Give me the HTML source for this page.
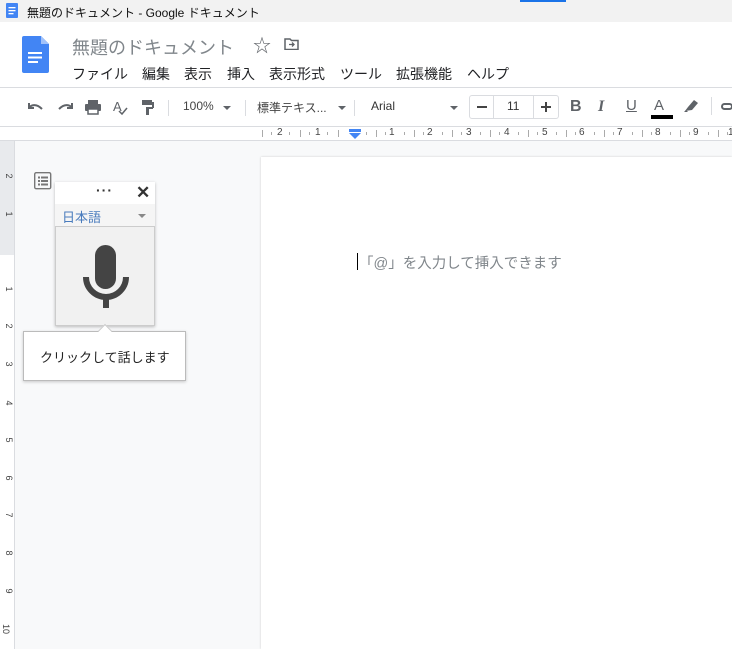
<!DOCTYPE html>
<html><head><meta charset="utf-8"><style>
*{margin:0;padding:0;box-sizing:border-box}
body{width:732px;height:649px;overflow:hidden;background:#f8f9fa;font-family:"Liberation Sans","Noto Sans CJK JP",sans-serif;position:relative}
.a{position:absolute}
.t{white-space:nowrap}
.m{position:absolute;top:64px;font-size:14px;color:#202124;white-space:nowrap}
.vr{position:absolute;left:4px;font-size:9px;color:#444;transform:rotate(90deg);width:10px;text-align:center}
.hr{position:absolute;top:127px;font-size:10px;color:#444}
</style></head><body>
<div class="a" style="left:0;top:0;width:732px;height:22px;background:#f2f2f2"></div>
<div class="a" style="left:520px;top:0;width:46px;height:2px;background:#1a73e8"></div>
<svg class="a" style="left:6px;top:3px" width="12" height="15"><rect width="12" height="15" rx="1" fill="#4285f4"/><rect x="2.5" y="4" width="7" height="1.3" fill="#fff"/><rect x="2.5" y="7" width="7" height="1.3" fill="#fff"/><rect x="2.5" y="10" width="5" height="1.3" fill="#fff"/></svg>
<div class="a t" style="left:27px;top:4px;font-size:12px;color:#111">無題のドキュメント - Google ドキュメント</div>
<div class="a" style="left:0;top:22px;width:732px;height:66px;background:#fff"></div>
<svg class="a" style="left:22px;top:36px" width="27" height="37"><path d="M2 0h17l8 8v27a2 2 0 0 1-2 2H2a2 2 0 0 1-2-2V2a2 2 0 0 1 2-2z" fill="#4285f4"/><path d="M19 0l8 8h-8z" fill="#a1c2fa"/><rect x="6" y="16" width="14" height="2" fill="#fff"/><rect x="6" y="20.5" width="14" height="2" fill="#fff"/><rect x="6" y="25" width="10" height="2" fill="#fff"/></svg>
<div class="a t" style="left:72px;top:34px;font-size:18px;color:#80868b">無題のドキュメント</div>
<div class="a" style="left:253px;top:32px;font-size:18px;color:#5f6368">☆</div>
<svg class="a" style="left:284px;top:38px" width="15" height="12"><path d="M1 1h5l1.5 1.5H14v9H1z" fill="none" stroke="#5f6368" stroke-width="1.5"/><path d="M5 6.5h5M8 4.5l2 2-2 2" fill="none" stroke="#5f6368" stroke-width="1.3"/></svg>
<div class="m" style="left:72px">ファイル</div><div class="m" style="left:142px">編集</div><div class="m" style="left:184px">表示</div><div class="m" style="left:227px">挿入</div><div class="m" style="left:269px">表示形式</div><div class="m" style="left:340px">ツール</div><div class="m" style="left:396px">拡張機能</div><div class="m" style="left:467px">ヘルプ</div>
<div class="a" style="left:0;top:87px;width:732px;height:1px;background:#dadce0"></div>
<div class="a" style="left:0;top:88px;width:732px;height:38px;background:#fff"></div>
<svg class="a" style="left:26px;top:98px" width="700" height="18" fill="#5f6368">
<path d="M3 5v5h5M3 10c2-3 7-5 13 1" fill="none" stroke="#5f6368" stroke-width="2"/>
<path d="M46 5v5h-5M46 10c-2-3-7-5-13 1" fill="none" stroke="#5f6368" stroke-width="2"/>
<rect x="59" y="6" width="16" height="7" rx="1"/><rect x="62" y="2" width="10" height="4"/><rect x="62" y="11" width="10" height="5" fill="#fff" stroke="#5f6368" stroke-width="1.5"/>
<text x="87" y="13" font-size="13" font-family="Liberation Sans" fill="#5f6368">A</text><path d="M93 13l3 3 5-6" fill="none" stroke="#5f6368" stroke-width="1.5"/>
<rect x="116" y="2" width="10" height="5"/><rect x="126" y="4" width="2" height="6"/><rect x="120" y="9" width="7" height="2"/><rect x="120" y="9" width="3" height="8"/>
<rect x="142" y="2" width="1" height="16" fill="#dadce0"/>
<path d="M197 8h8l-4 4z"/>
<rect x="219" y="2" width="1" height="16" fill="#dadce0"/>
<path d="M312 8h8l-4 4z"/>
<rect x="328" y="2" width="1" height="16" fill="#dadce0"/>
<path d="M424 8h8l-4 4z"/>
</svg>
<div class="a t" style="left:183px;top:99px;font-size:12px;color:#444">100%</div>
<div class="a t" style="left:257px;top:99px;font-size:12px;color:#444">標準テキス...</div>
<div class="a t" style="left:371px;top:99px;font-size:12px;color:#333">Arial</div>
<div class="a" style="left:469px;top:95px;width:90px;height:24px;border:1px solid #dadce0;border-radius:3px"></div>
<div class="a" style="left:493px;top:95px;width:1px;height:24px;background:#dadce0"></div>
<div class="a" style="left:533px;top:95px;width:1px;height:24px;background:#dadce0"></div>
<div class="a" style="left:477px;top:106px;width:10px;height:2px;background:#444"></div>
<div class="a t" style="left:507px;top:99px;font-size:12px;color:#333">11</div>
<div class="a" style="left:541px;top:106px;width:10px;height:2px;background:#444"></div>
<div class="a" style="left:545px;top:102px;width:2px;height:10px;background:#444"></div>
<div class="a t" style="left:570px;top:98px;font-size:16px;font-weight:bold;color:#5f6368">B</div>
<div class="a t" style="left:598px;top:98px;font-size:16px;font-style:italic;font-weight:bold;color:#5f6368;font-family:'Liberation Serif',serif">I</div>
<div class="a t" style="left:626px;top:97px;font-size:15px;color:#5f6368;text-decoration:underline">U</div>
<div class="a t" style="left:654px;top:97px;font-size:15px;color:#5f6368">A</div>
<div class="a" style="left:651px;top:115px;width:22px;height:4px;background:#000"></div>
<svg class="a" style="left:683px;top:99px" width="16" height="14"><path d="M2 12l3-4 6-7 4 3-6 7z" fill="#5f6368"/><path d="M1 13h4l-2-2z" fill="#5f6368"/></svg>
<div class="a" style="left:711px;top:97px;width:1px;height:18px;background:#dadce0"></div>
<div class="a" style="left:721px;top:103px;width:12px;height:7px;border:2px solid #5f6368;border-radius:4px"></div>
<div class="a" style="left:0;top:126px;width:732px;height:1px;background:#dadce0"></div>
<div class="a" style="left:0;top:127px;width:732px;height:14px;background:#fff"></div>
<div class="a" style="left:0;top:140px;width:732px;height:1px;background:#dadce0"></div>
<div class="hr" style="left:277px">2</div><div class="hr" style="left:315px">1</div>
<div class="hr" style="left:389px">1</div><div class="hr" style="left:427px">2</div><div class="hr" style="left:466px">3</div><div class="hr" style="left:504px">4</div><div class="hr" style="left:542px">5</div><div class="hr" style="left:579px">6</div><div class="hr" style="left:617px">7</div><div class="hr" style="left:655px">8</div><div class="hr" style="left:693px">9</div><div class="hr" style="left:728px">1</div>
<svg class="a" style="left:260px;top:130px" width="472" height="8"><g fill="#aaa">
<rect x="2" y="0" width="1" height="7"/><rect x="11" y="2" width="1" height="3"/><rect x="29" y="2" width="1" height="3"/><rect x="40" y="0" width="1" height="7"/><rect x="49" y="2" width="1" height="3"/><rect x="67" y="2" width="1" height="3"/><rect x="78" y="0" width="1" height="7"/>
<rect x="106" y="2" width="1" height="3"/><rect x="116" y="0" width="1" height="7"/><rect x="125" y="2" width="1" height="3"/><rect x="144" y="2" width="1" height="3"/><rect x="154" y="0" width="1" height="7"/><rect x="163" y="2" width="1" height="3"/><rect x="182" y="2" width="1" height="3"/><rect x="192" y="0" width="1" height="7"/><rect x="201" y="2" width="1" height="3"/><rect x="220" y="2" width="1" height="3"/><rect x="230" y="0" width="1" height="7"/><rect x="239" y="2" width="1" height="3"/><rect x="258" y="2" width="1" height="3"/><rect x="268" y="0" width="1" height="7"/><rect x="277" y="2" width="1" height="3"/><rect x="296" y="2" width="1" height="3"/><rect x="306" y="0" width="1" height="7"/><rect x="315" y="2" width="1" height="3"/><rect x="334" y="2" width="1" height="3"/><rect x="344" y="0" width="1" height="7"/><rect x="353" y="2" width="1" height="3"/><rect x="372" y="2" width="1" height="3"/><rect x="382" y="0" width="1" height="7"/><rect x="391" y="2" width="1" height="3"/><rect x="410" y="2" width="1" height="3"/><rect x="420" y="0" width="1" height="7"/><rect x="429" y="2" width="1" height="3"/><rect x="448" y="2" width="1" height="3"/><rect x="458" y="0" width="1" height="7"/><rect x="467" y="2" width="1" height="3"/></g></svg>
<svg class="a" style="left:349px;top:129px" width="12" height="10"><rect x="0" y="0" width="12" height="3" fill="#4285f4"/><path d="M0 4h12l-6 6z" fill="#4285f4"/></svg>
<div class="a" style="left:0;top:141px;width:14px;height:508px;background:#fff"></div>
<div class="a" style="left:0;top:141px;width:14px;height:114px;background:#e8eaed"></div>
<div class="a" style="left:14px;top:141px;width:1px;height:508px;background:#dadce0"></div>
<div class="vr" style="top:171px">2</div><div class="vr" style="top:209px">1</div>
<div class="vr" style="top:284px">1</div><div class="vr" style="top:321px">2</div><div class="vr" style="top:359px">3</div><div class="vr" style="top:398px">4</div><div class="vr" style="top:435px">5</div><div class="vr" style="top:473px">6</div><div class="vr" style="top:510px">7</div><div class="vr" style="top:548px">8</div><div class="vr" style="top:586px">9</div><div class="vr" style="top:624px;left:1px">10</div>
<div class="a" style="left:261px;top:157px;width:471px;height:492px;background:#fff;box-shadow:0 0 2px #ccc"></div>
<div class="a" style="left:357px;top:253px;width:1px;height:17px;background:#000"></div>
<div class="a t" style="left:359px;top:252px;font-size:14.5px;color:#80868b">「@」を入力して挿入できます</div>
<svg class="a" style="left:34px;top:172px" width="18" height="18"><rect x="0.7" y="0.7" width="16" height="16" rx="1.5" fill="none" stroke="#777" stroke-width="1.4"/><g fill="#777"><rect x="4" y="4.5" width="2" height="2"/><rect x="7" y="4.5" width="7" height="2"/><rect x="4" y="8" width="2" height="2"/><rect x="7" y="8" width="7" height="2"/><rect x="4" y="11.5" width="2" height="2"/><rect x="7" y="11.5" width="7" height="2"/></g></svg>
<div class="a" style="left:55px;top:182px;width:100px;height:144px;background:#fff;box-shadow:0 1px 3px rgba(0,0,0,.25)"></div>
<div class="a t" style="left:96px;top:182px;font-size:14px;color:#333;letter-spacing:1px;font-weight:bold">···</div>
<div class="a t" style="left:136px;top:183px;font-size:17px;color:#333;font-weight:bold">✕</div>
<div class="a" style="left:55px;top:204px;width:100px;height:22px;background:#f5f5f5"></div>
<div class="a t" style="left:62px;top:207px;font-size:13px;color:#4a7cbd">日本語</div>
<div class="a" style="left:138px;top:214px;border:4px solid transparent;border-top:4px solid #888"></div>
<div class="a" style="left:55px;top:226px;width:100px;height:100px;background:#f1f1f1;border:1px solid #ccc"></div>
<svg class="a" style="left:83px;top:245px" width="46" height="63"><rect x="12" y="0" width="21" height="44" rx="10.5" fill="#444"/><path d="M3 32a19.5 19.5 0 0 0 40 0" fill="none" stroke="#444" stroke-width="6"/><rect x="20" y="50" width="6" height="13" fill="#444"/></svg>
<div class="a" style="left:23px;top:331px;width:163px;height:50px;background:#fff;border:1px solid #bbb;box-shadow:0 1px 3px rgba(0,0,0,.2)"></div>
<div class="a" style="left:100px;top:326px;width:10px;height:10px;background:#fff;transform:rotate(45deg);border-left:1px solid #ccc;border-top:1px solid #ccc"></div>
<div class="a t" style="left:40px;top:347px;font-size:13px;color:#222">クリックして話します</div>
</body></html>
